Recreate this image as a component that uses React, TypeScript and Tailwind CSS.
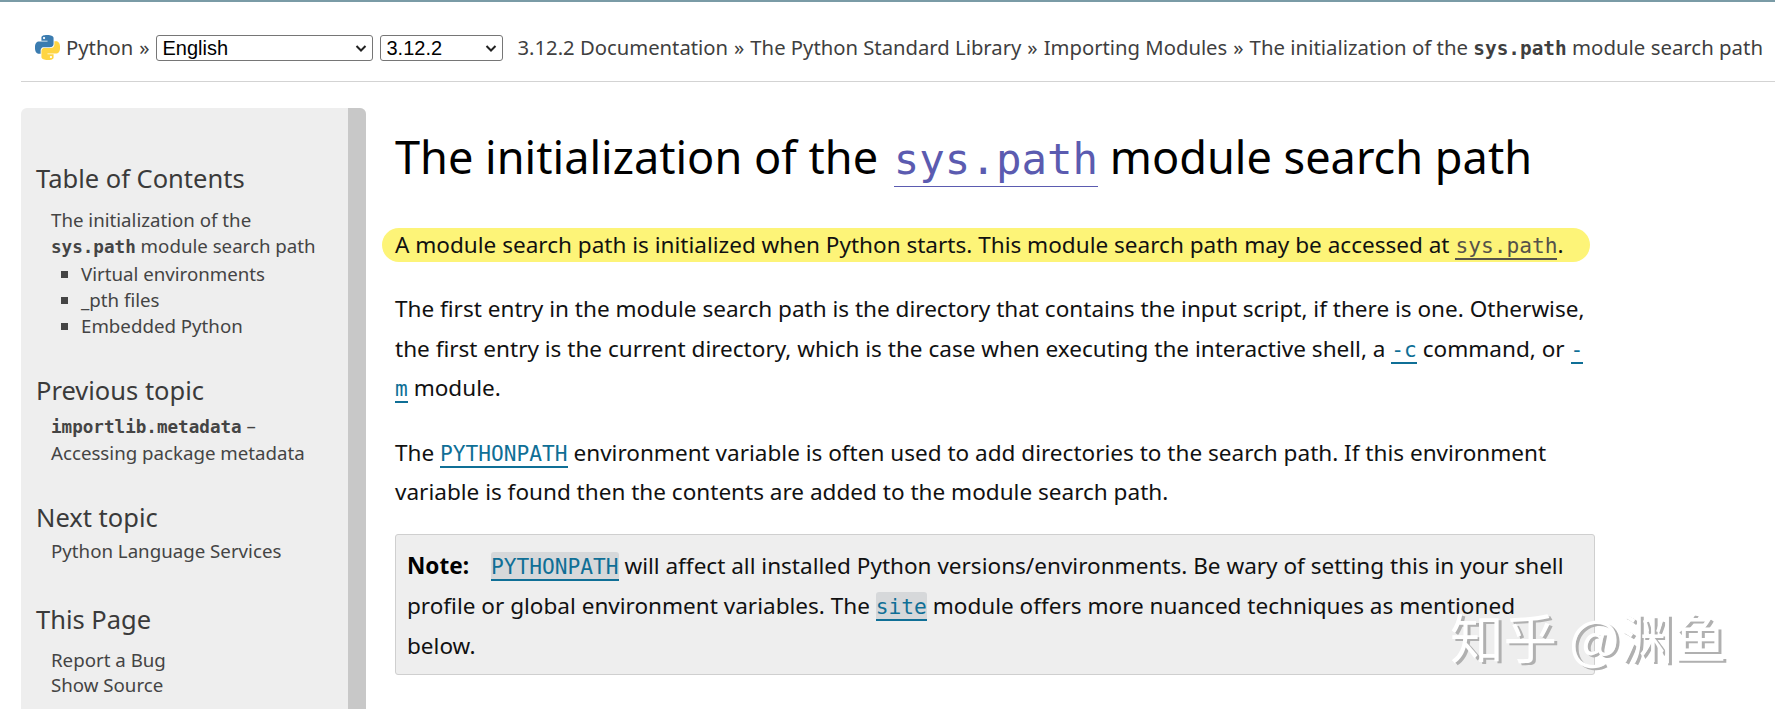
import React from "react";

const sans = "font-['Noto_Sans','Open_Sans',sans-serif]";
const mono = "font-['DejaVu_Sans_Mono','Liberation_Mono',monospace]";

function Logo() {
  return (
    <svg viewBox="0 0 24 24" className="w-[25px] h-[25px] shrink-0">
      <path
        fill="#3b7cb0"
        fillRule="evenodd"
        d="M14.25.18l.9.2.73.26.59.3.45.32.34.34.25.34.16.33.1.3.04.26.02.2-.01.13V8.5l-.05.63-.13.55-.21.46-.26.38-.3.31-.33.25-.35.19-.35.14-.33.1-.3.07-.26.04-.21.02H8.77l-.69.05-.59.14-.5.22-.41.27-.33.32-.27.35-.2.36-.15.37-.1.35-.07.32-.04.27-.02.21v3.06H3.17l-.21-.03-.28-.07-.32-.12-.35-.18-.36-.26-.36-.36-.35-.46-.32-.59-.28-.73-.21-.88-.14-1.05-.05-1.23.06-1.22.16-1.04.24-.87.32-.71.36-.57.4-.44.42-.33.42-.24.4-.16.36-.1.32-.05.24-.01h.16l.06.01h8.16v-.83H6.18l-.01-2.75-.02-.37.05-.34.11-.31.17-.28.25-.26.31-.23.38-.2.44-.18.51-.15.58-.12.64-.1.71-.06.77-.04.84-.02 1.27.05zm-6.3 1.98l-.23.33-.08.41.08.41.23.34.33.22.41.09.41-.09.33-.22.23-.34.08-.41-.08-.41-.23-.33-.33-.22-.41-.09-.41.09z"
      />
      <path
        fill="#ffd543"
        fillRule="evenodd"
        d="M21.04 6.11l.28.06.32.12.35.18.36.27.36.35.35.47.32.59.28.73.21.88.14 1.04.05 1.23-.06 1.23-.16 1.04-.24.86-.32.71-.36.57-.4.45-.42.33-.42.24-.4.16-.36.09-.32.05-.24.02-.16-.01h-8.22v.82h5.84l.01 2.76.02.36-.05.34-.11.31-.17.29-.25.25-.31.24-.38.2-.44.17-.51.15-.58.13-.64.09-.71.07-.77.04-.84.01-1.27-.04-1.07-.14-.9-.2-.73-.25-.59-.3-.45-.33-.34-.34-.25-.34-.16-.33-.1-.3-.04-.25-.02-.2.01-.13v-5.34l.05-.64.13-.54.21-.46.26-.38.3-.32.33-.24.35-.2.35-.14.33-.1.3-.06.26-.04.21-.02.13-.01h5.84l.69-.05.59-.14.5-.21.41-.28.33-.32.27-.35.2-.36.15-.36.1-.35.07-.32.04-.28.02-.21V6.07h2.09l.14.01zm-6.47 14.25l-.23.33-.08.41.08.41.23.33.33.23.41.08.41-.08.33-.23.23-.33.08-.41-.08-.41-.23-.33-.33-.23-.41-.08-.41.08z"
      />
    </svg>
  );
}

function FakeSelect({ label, w }: { label: string; w: string }) {
  return (
    <span className={`${w} h-[26px] flex items-center justify-between shrink-0 bg-white border border-[#767676] rounded-[3px] pl-[5px] pr-[5px] font-['Liberation_Sans',sans-serif] text-[20px] text-black`}>
      {label}
      <svg viewBox="0 0 12 12" className="w-[12px] h-[12px]" fill="none" stroke="#222" strokeWidth="2">
        <path d="M1.5 4l4.5 4.5L10.5 4" />
      </svg>
    </span>
  );
}

function Code({ children, cls = "" }: { children: React.ReactNode; cls?: string }) {
  return <span className={`${mono} leading-none ${cls}`}>{children}</span>;
}

function Link({ children, bg = false }: { children: React.ReactNode; bg?: boolean }) {
  return (
    <span className={`${mono} text-[21.2px] leading-none text-[#0f6f96] border-b-2 border-[#0f6f96] ${bg ? "bg-[#d6d8da] rounded-t-[3px] pt-[2px]" : ""}`}>
      {children}
    </span>
  );
}

function SideHead({ children, cls }: { children: React.ReactNode; cls: string }) {
  return <h3 className={`text-[25.5px] leading-[34px] text-[#3a3a3a] pl-[15px] ${cls}`}>{children}</h3>;
}

export default function App() {
  return (
    <div className={`relative w-[1775px] h-[709px] overflow-hidden bg-white ${sans}`}>
      <div className="h-[2px] bg-[#7a9ba6]" />
      <nav className="ml-[21px] h-[80px] border-b border-[#d3d3d3] flex items-center pl-[14px] pt-[12px] text-[20.25px] text-[#3f3f3f] whitespace-nowrap">
        <Logo />
        <span className="ml-[6px] shrink-0">Python</span>
        <span className="ml-[6px] mr-[7px] shrink-0">»</span>
        <FakeSelect label="English" w="w-[217px]" />
        <span className="w-[7px] shrink-0" />
        <FakeSelect label="3.12.2" w="w-[123px]" />
        <span className="ml-[14px] shrink-0">3.12.2 Documentation</span>
        <span className="mx-[6px] shrink-0">»</span>
        <span className="shrink-0">The Python Standard Library</span>
        <span className="mx-[6px] shrink-0">»</span>
        <span className="shrink-0">Importing Modules</span>
        <span className="mx-[6px] shrink-0">»</span>
        <span className="shrink-0 text-[20.4px]">
          The initialization of the <Code cls="font-bold text-[19.4px]">sys.path</Code> module search path
        </span>
      </nav>

      <div className="flex ml-[21px] mt-[26px] h-[601px]">
        <aside className="w-[345px] shrink-0 flex bg-[#eeeeee] rounded-t-[6px] overflow-hidden">
          <div className="flex-1 pt-[53px] text-[18.7px] text-[#444] leading-[26px] whitespace-nowrap">
            <SideHead cls="">Table of Contents</SideHead>
            <div className="pl-[30px] mt-[12px]">
              <div>The initialization of the</div>
              <div>
                <Code cls="font-bold text-[17.6px]">sys.path</Code> module search path
              </div>
              <ul className="list-[square] pl-[30px] mt-[2px]">
                <li>Virtual environments</li>
                <li>_pth files</li>
                <li>Embedded Python</li>
              </ul>
            </div>
            <SideHead cls="mt-[34px]">Previous topic</SideHead>
            <div className="pl-[30px] mt-[5px] leading-[27px]">
              <div>
                <Code cls="font-bold text-[17.6px]">importlib.metadata</Code> –
              </div>
              <div>Accessing package metadata</div>
            </div>
            <SideHead cls="mt-[34px]">Next topic</SideHead>
            <div className="pl-[30px] mt-[4px]">Python Language Services</div>
            <SideHead cls="mt-[38px]">This Page</SideHead>
            <div className="pl-[30px] mt-[11px] leading-[25px]">
              <div>Report a Bug</div>
              <div>Show Source</div>
            </div>
          </div>
          <div className="w-[18px] bg-[#c8c8c8]" />
        </aside>

        <main className="flex-1 pl-[29px] text-[22.55px] leading-[39.6px] text-[#111] whitespace-nowrap">
          <h1 className="text-[45.1px] leading-[60px] text-black mt-[19px]">
            The initialization of the{" "}
            <span className={`${mono} ml-[4px] pb-[2px] text-[42.4px] leading-none text-[#5b5bb0] border-b border-[#5b5bb0]`}>sys.path</span> module
            search path
          </h1>
          <p className="mt-[41px] -ml-[13px] w-[1208px] h-[34px] pl-[13px] leading-[34px] rounded-full bg-[#fdf478]">
            A module search path is initialized when Python starts. This module search path may be accessed at{" "}
            <span className={`${mono} text-[21.2px] leading-none text-[#55524a] border-b-2 border-[#55524a]`}>sys.path</span>.
          </p>
          <p className="mt-[27px]">
            The first entry in the module search path is the directory that contains the input script, if there is one. Otherwise,
            <br />
            the first entry is the current directory, which is the case when executing the interactive shell, a <Link>-c</Link> command, or <Link>-</Link>
            <br />
            <Link>m</Link> module.
          </p>
          <p className="mt-[25px]">
            The <Link>PYTHONPATH</Link> environment variable is often used to add directories to the search path. If this environment
            <br />
            variable is found then the contents are added to the module search path.
          </p>
          <div className="mt-[22.5px] w-[1200px] h-[141px] bg-[#eeeeee] border border-[#cfcfcf] rounded-[3px] pl-[11px] pt-[11px]">
            <b className="font-bold text-black">Note:</b>
            <span className="inline-block w-[22px]" />
            <Link bg>PYTHONPATH</Link> will affect all installed Python versions/environments. Be wary of setting this in your shell
            <br />
            profile or global environment variables. The <Link bg>site</Link> module offers more nuanced techniques as mentioned
            <br />
            below.
          </div>
        </main>
      </div>

      <div
        className="absolute left-[1450px] top-[606px] text-[53.5px] leading-[60px] text-white whitespace-nowrap font-['Noto_Sans_CJK_SC',sans-serif] [text-shadow:3px_2px_0_#b0b0b0]"
      >
        知乎 @渊鱼
      </div>
    </div>
  );
}
